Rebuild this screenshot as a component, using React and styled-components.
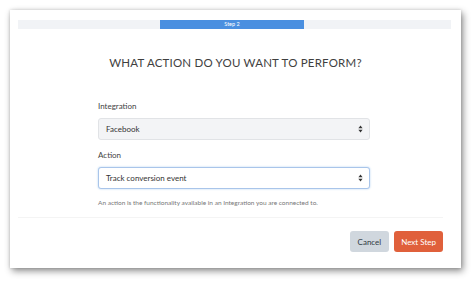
import React from "react";
import styled, { createGlobalStyle } from "styled-components";

const GlobalStyle = createGlobalStyle`
  html, body {
    margin: 0;
    padding: 0;
    background: #ffffff;
    font-family: "Lato", "Noto Sans", sans-serif;
  }
`;

function Arrows() {
  return (
    <svg width="5" height="8" viewBox="0 0 5 8">
      <path d="M2.5 0.5 L4.6 3.2 H0.4 Z" fill="#333" />
      <path d="M2.5 7.5 L4.6 4.8 H0.4 Z" fill="#333" />
    </svg>
  );
}

export default function App() {
  return (
    <>
      <GlobalStyle />
      <Page>
        <Card>
          <Progress>
            <span />
            <StepBar>Step 2</StepBar>
            <span />
          </Progress>
          <Title>What action do you want to perform?</Title>
          <Form>
            <Label>Integration</Label>
            <Select $filled>
              Facebook
              <Arrows />
            </Select>
            <Label $top={10}>Action</Label>
            <Select $focused>
              Track conversion event
              <Arrows />
            </Select>
            <Help>An action is the functionality available in an Integration you are connected to.</Help>
          </Form>
          <Footer>
            <Button $variant="cancel">Cancel</Button>
            <Button $variant="primary">Next Step</Button>
          </Footer>
        </Card>
      </Page>
    </>
  );
}

const Page = styled.div`
  width: 474px;
  height: 283px;
  box-sizing: border-box;
  padding: 10px 13px 15px 10px;
`;

const Card = styled.div`
  height: 258px;
  background: #fff;
  box-shadow: 2px 3px 7px rgba(0, 0, 0, 0.45), 0 0 3px rgba(0, 0, 0, 0.15);
  display: flex;
  flex-direction: column;
  padding-top: 10px;
  box-sizing: border-box;
`;

const Progress = styled.div`
  margin: 0 10px 0 8px;
  height: 9px;
  background: #f1f3f6;
  display: grid;
  grid-template-columns: 142px 144px 1fr;
`;

const StepBar = styled.div`
  background: #4a8fe0;
  color: #fff;
  font-size: 5.5px;
  line-height: 9px;
  text-align: center;
`;

const Title = styled.h1`
  margin: 27px 0 0;
  text-align: center;
  font-size: 11.5px;
  font-weight: 400;
  letter-spacing: 0.2px;
  text-transform: uppercase;
  color: #3f3f3f;
  line-height: 14px;
`;

const Form = styled.div`
  margin: 31px 0 0 88px;
  width: 272px;
  display: flex;
  flex-direction: column;
`;

const Label = styled.div`
  font-size: 8px;
  color: #444;
  line-height: 10px;
  margin-top: ${(p) => p.$top || 0}px;
  margin-bottom: 7px;
`;

const Select = styled.div`
  height: 22px;
  box-sizing: border-box;
  display: flex;
  align-items: center;
  justify-content: space-between;
  padding: 0 6px 0 7px;
  font-size: 8px;
  color: #333;
  border-radius: 3px;
  background: ${(p) => (p.$filled ? "#f3f4f6" : "#fff")};
  border: 1px solid ${(p) => (p.$focused ? "#a9c5ea" : "#e1e3e6")};
  box-shadow: ${(p) => (p.$focused ? "0 0 2px rgba(74,143,224,0.45)" : "none")};
`;

const Help = styled.div`
  margin-top: 10px;
  font-size: 6.5px;
  line-height: 8px;
  color: #777;
`;

const Footer = styled.div`
  margin: 10px 18px 0 8px;
  padding-top: 13px;
  border-top: 1px solid #f4f4f4;
  display: flex;
  justify-content: flex-end;
  gap: 5px;
`;

const Button = styled.div`
  height: 21px;
  padding: 0 ${(p) => (p.$variant === "primary" ? 7 : 8)}px;
  display: flex;
  align-items: center;
  font-size: 8px;
  border-radius: 3px;
  color: ${(p) => (p.$variant === "primary" ? "#fff" : "#2f3a44")};
  background: ${(p) => (p.$variant === "primary" ? "#e0603b" : "#d0d7de")};
`;
